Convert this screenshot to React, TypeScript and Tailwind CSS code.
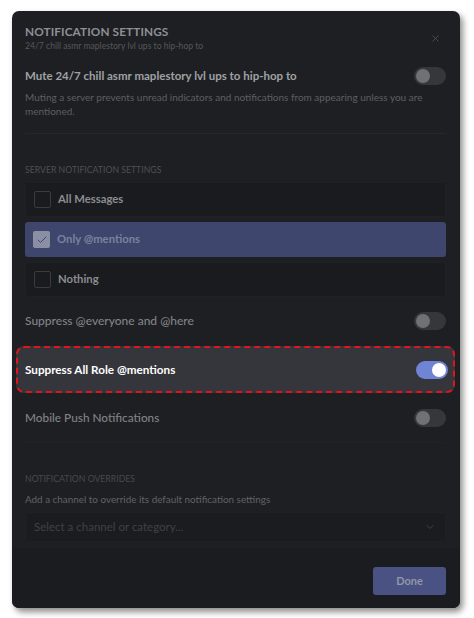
import { ChevronDown, X, Check } from "lucide-react";

const Toggle = ({ on = false }: { on?: boolean }) => (
  <div
    className={`w-[32px] h-[18px] rounded-full flex items-center px-[2px] ${
      on ? "bg-[#6f84d4] justify-end" : "bg-[#36373b] justify-start"
    }`}
  >
    <div className={`w-[14px] h-[14px] rounded-full ${on ? "bg-white" : "bg-[#6e7175]"}`} />
  </div>
);

const options = [
  { label: "All Messages", checked: false },
  { label: "Only @mentions", checked: true },
  { label: "Nothing", checked: false },
];

export default function App() {
  return (
    <div
      className="w-[474px] h-[618px] bg-white pt-[11px] pl-[12px]"
      style={{ fontFamily: "Lato, 'Open Sans', sans-serif" }}
    >
      <div className="w-[448px] h-[597px] rounded-[7px] bg-[#1e1f22] shadow-[3px_4px_6px_rgba(0,0,0,0.45)] flex flex-col overflow-hidden">
        <div className="flex-1 pl-[13px] pr-[14px]">
          {/* header */}
          <div className="flex justify-between items-start pt-[13px]">
            <div>
              <h2 className="text-[11.8px] leading-[16px] font-bold text-[#8d9095] tracking-[0.1px]">
                NOTIFICATION SETTINGS
              </h2>
              <p className="text-[8.6px] leading-[12px] text-[#55585c]">
                24/7 chill asmr maplestory lvl ups to hip-hop to
              </p>
            </div>
            <X className="w-[11px] h-[11px] text-[#4c4f53] mt-[9px] mr-[5px]" strokeWidth={2} />
          </div>

          {/* mute */}
          <div className="flex items-center justify-between mt-[15px] h-[18px]">
            <span className="text-[11.5px] font-bold text-[#9fa2a6]">
              Mute 24/7 chill asmr maplestory lvl ups to hip-hop to
            </span>
            <Toggle />
          </div>
          <p className="text-[10px] leading-[14px] text-[#5c5f63] mt-[5px]">
            Muting a server prevents unread indicators and notifications from appearing unless you are
            mentioned.
          </p>
          <div className="h-px bg-[#26272b] mt-[15px]" />

          {/* server notification settings */}
          <p className="text-[8.7px] leading-[12px] uppercase text-[#4d5054] mt-[30px]">
            Server Notification Settings
          </p>
          <div className="flex flex-col gap-[5px] mt-[6px]">
            {options.map((o) => (
              <div
                key={o.label}
                className={`h-[35px] rounded-[3px] flex items-center px-[8px] gap-[7px] ${
                  o.checked ? "bg-[#3e466e]" : "bg-[#1a1b1e] border border-[#202124]"
                }`}
              >
                <div
                  className={`w-[17px] h-[17px] rounded-[2px] flex items-center justify-center ${
                    o.checked ? "bg-[#8a8fa3]" : "border border-[#3a3b3f]"
                  }`}
                >
                  {o.checked && <Check className="w-[12px] h-[12px] text-[#4a3f7a]" strokeWidth={2} />}
                </div>
                <span className={`text-[11.3px] font-bold ${o.checked ? "text-[#7b829c]" : "text-[#8a8d91]"}`}>
                  {o.label}
                </span>
              </div>
            ))}
          </div>

          {/* suppress toggles */}
          <div className="flex items-center justify-between mt-[15px] h-[18px]">
            <span className="text-[12px] font-medium text-[#808387]">Suppress @everyone and @here</span>
            <Toggle />
          </div>
          <div className="-mx-[9px] mt-[16px] h-[47px] rounded-[8px] border-2 border-dashed border-[#e0141e] bg-[#35363b] flex items-center justify-between pl-[7px] pr-[5px]">
            <span className="text-[11.7px] font-bold text-white">Suppress All Role @mentions</span>
            <Toggle on />
          </div>
          <div className="flex items-center justify-between mt-[16px] h-[18px]">
            <span className="text-[11.8px] font-medium text-[#808387]">Mobile Push Notifications</span>
            <Toggle />
          </div>
          <div className="h-px bg-[#222327] mt-[15px]" />

          {/* overrides */}
          <p className="text-[8.7px] leading-[12px] uppercase text-[#46494d] mt-[30px]">
            Notification Overrides
          </p>
          <p className="text-[9.9px] leading-[14px] text-[#606367] mt-[7px]">
            Add a channel to override its default notification settings
          </p>
          <div className="mt-[6px] h-[30px] rounded-[3px] bg-[#1b1c1f] border border-[#202125] flex items-center justify-between pl-[8px] pr-[9px]">
            <span className="text-[11.5px] text-[#3e4145]">Select a channel or category...</span>
            <ChevronDown className="w-[12px] h-[12px] text-[#3e4145]" strokeWidth={2} />
          </div>
        </div>

        {/* footer */}
        <div className="h-[60px] bg-[#1b1c1f] flex items-start justify-end pr-[14px] pt-[19px]">
          <button className="w-[73px] h-[28px] rounded-[3px] bg-[#4a5283] text-[11px] font-bold text-[#9196a8]">
            Done
          </button>
        </div>
      </div>
    </div>
  );
}
